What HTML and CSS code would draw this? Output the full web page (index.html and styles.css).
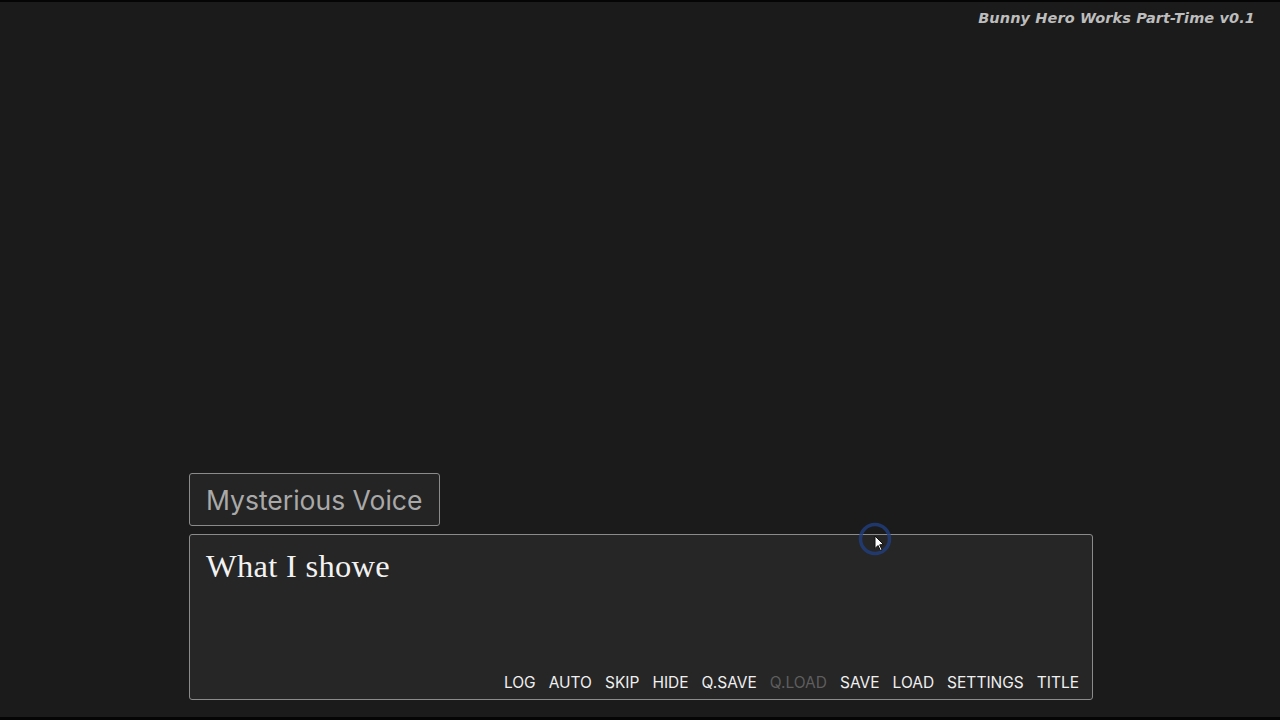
FILE: index.html
```html
<!DOCTYPE html>
<html>
<head>
<meta charset="utf-8">
<link rel="stylesheet" href="styles.css">
</head>
<body>
<div class="screen">
  <header class="topbar">
    <div class="game-title">Bunny Hero Works Part-Time v0.1</div>
  </header>
  <main class="stage"></main>
  <section class="dialogue">
    <div class="namebox">Mysterious Voice</div>
    <div class="textbox">
      <p class="line">What I showe</p>
      <nav class="quickmenu">
        <span class="qbtn">LOG</span>
        <span class="qbtn">AUTO</span>
        <span class="qbtn">SKIP</span>
        <span class="qbtn">HIDE</span>
        <span class="qbtn">Q.SAVE</span>
        <span class="qbtn disabled">Q.LOAD</span>
        <span class="qbtn">SAVE</span>
        <span class="qbtn">LOAD</span>
        <span class="qbtn">SETTINGS</span>
        <span class="qbtn">TITLE</span>
      </nav>
    </div>
  </section>
  <div class="bottombar"></div>
  <svg class="cursor" width="40" height="40" viewBox="0 0 40 40">
    <circle cx="18" cy="18" r="14.5" fill="none" stroke="#213f80" stroke-width="3.5" opacity="0.8"/>
    <path d="M18 15 L18 27.5 L21 24.5 L23.4 29.5 L25 28.8 L22.7 23.8 L26.6 23.6 Z" fill="#ffffff" stroke="#111" stroke-width="1"/>
  </svg>
</div>
</body>
</html>
```
FILE: styles.css
```css
* { box-sizing: border-box; }
html, body { margin: 0; padding: 0; }
body { background: #1b1b1b; }
.screen {
  position: relative;
  width: 1280px;
  height: 720px;
  display: flex;
  flex-direction: column;
  background: #1b1b1b;
  border-top: 2px solid #050505;
  overflow: hidden;
}
.topbar {
  display: flex;
  justify-content: flex-end;
  padding: 8px 25px 0 0;
}
.game-title {
  font-family: "DejaVu Sans", "Liberation Sans", sans-serif;
  font-style: italic;
  font-weight: bold;
  font-size: 14.5px;
  color: #bdbdbd;
  letter-spacing: 0.1px;
}
.stage { flex: 1; }
.dialogue {
  display: flex;
  flex-direction: column;
  align-items: flex-start;
  gap: 8px;
  padding-left: 189px;
  margin-bottom: 17px;
}
.namebox {
  width: 251px;
  height: 53px;
  border: 1.5px solid #8b8b8b;
  border-radius: 3px;
  background: #242424;
  color: #a9a9a9;
  font-family: Inter, "Noto Sans", sans-serif;
  font-size: 26.5px;
  display: flex;
  align-items: center;
  padding-left: 16px;
}
.textbox {
  width: 904px;
  height: 166px;
  border: 1.5px solid #8b8b8b;
  border-radius: 3px;
  background: #262626;
  display: flex;
  flex-direction: column;
  justify-content: space-between;
  padding: 13px 13px 7px 16px;
}
.line {
  margin: 0;
  font-family: "Liberation Serif", "DejaVu Serif", serif;
  font-size: 32.5px;
  color: #f2f2f2;
  letter-spacing: 0.3px;
}
.quickmenu {
  display: flex;
  justify-content: flex-end;
  gap: 13px;
}
.qbtn {
  font-family: Inter, "Noto Sans", sans-serif;
  font-size: 15.5px;
  color: #f0f0f0;
}
.qbtn.disabled { color: #5e5e5e; }
.bottombar {
  height: 3px;
  background: #050505;
}
.cursor {
  position: absolute;
  left: 857px;
  top: 519px;
}
```
